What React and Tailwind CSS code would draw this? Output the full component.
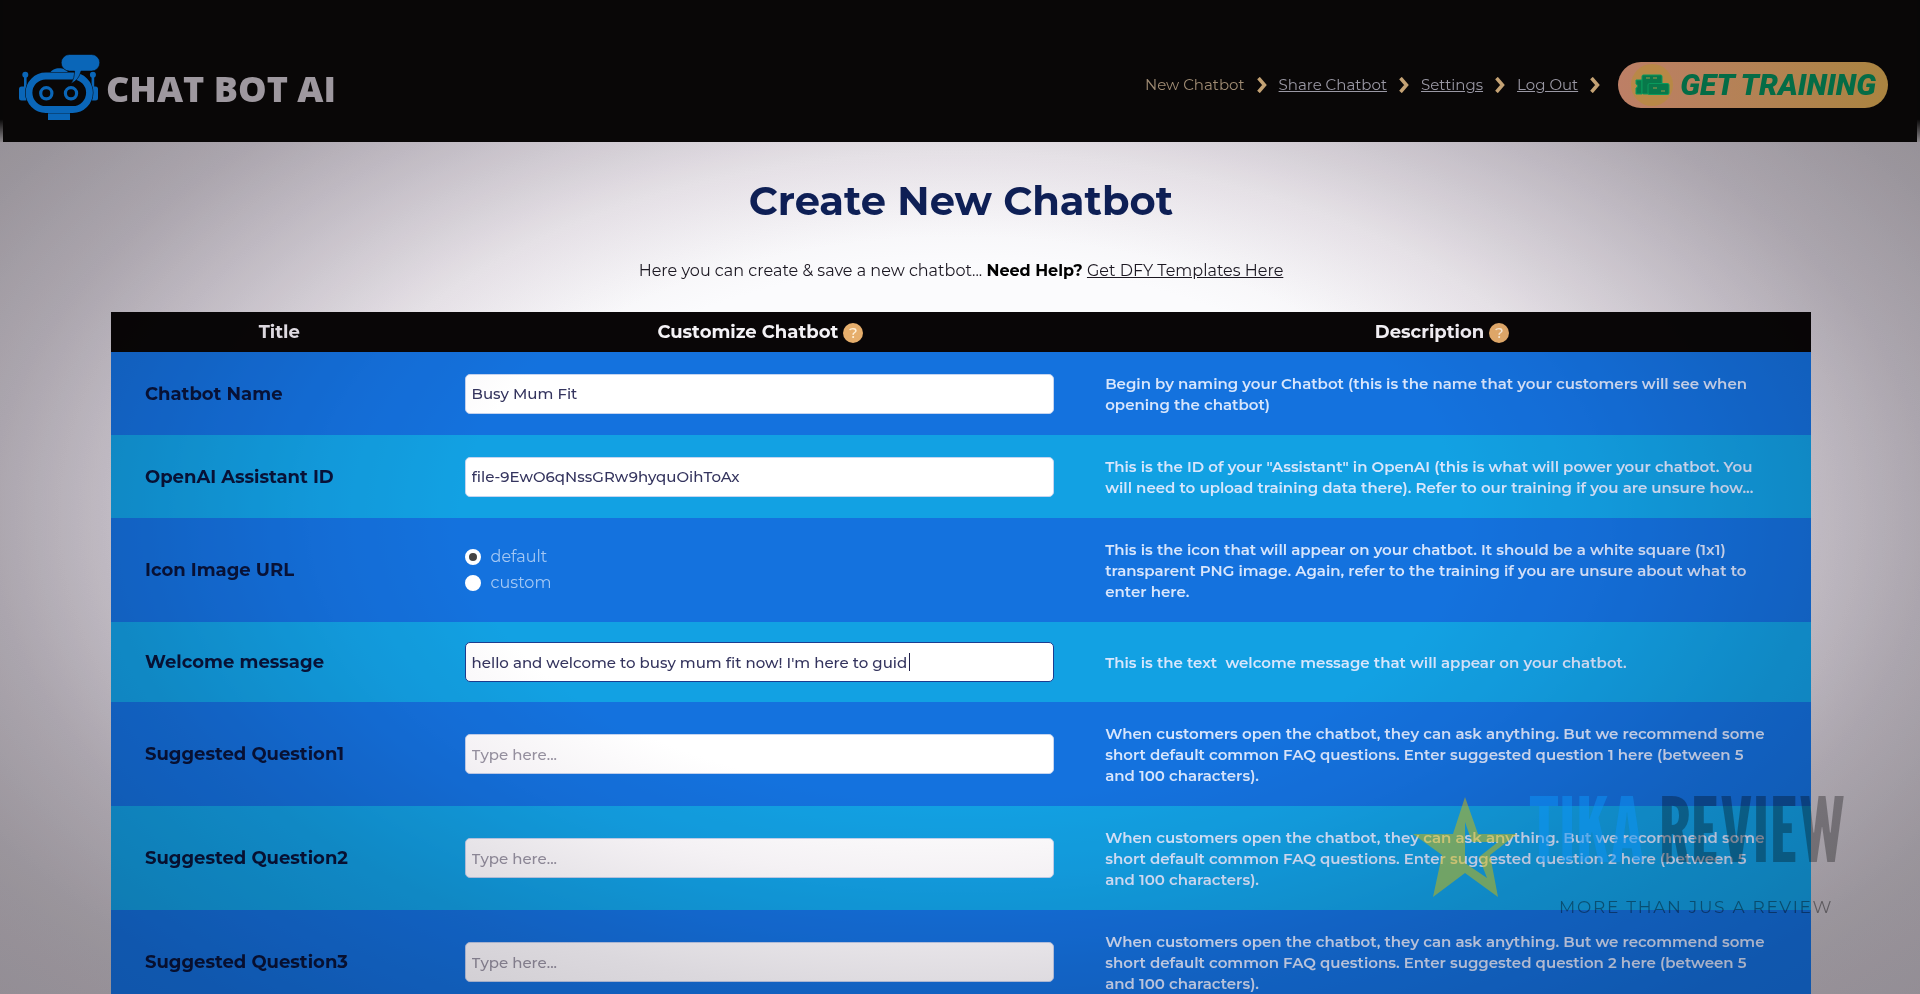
import { useState } from 'react';

const NAV = [
  { label: 'New Chatbot', active: true },
  { label: 'Share Chatbot' },
  { label: 'Settings' },
  { label: 'Log Out' },
];

const faq = (n) =>
  `When customers open the chatbot, they can ask anything. But we recommend some short default common FAQ questions. Enter suggested question ${n} here (between 5 and 100 characters).`;

const FIELDS = [
  {
    id: 'name', title: 'Chatbot Name', value: 'Busy Mum Fit', height: 'h-[83px]',
    desc: 'Begin by naming your Chatbot (this is the name that your customers will see when opening the chatbot)',
  },
  {
    id: 'assistant', title: 'OpenAI Assistant ID', value: 'file-9EwO6qNssGRw9hyquOihToAx', height: 'h-[83px]',
    desc: 'This is the ID of your "Assistant" in OpenAI (this is what will power your chatbot. You will need to upload training data there). Refer to our training if you are unsure how...',
  },
  {
    id: 'icon', title: 'Icon Image URL', type: 'radio', height: 'h-[104px]',
    desc: 'This is the icon that will appear on your chatbot. It should be a white square (1x1) transparent PNG image. Again, refer to the training if you are unsure about what to enter here.',
  },
  {
    id: 'welcome', title: 'Welcome message', value: "hello and welcome to busy mum fit now! I'm here to guid", focus: true, height: 'h-20',
    desc: 'This is the text  welcome message that will appear on your chatbot.',
  },
  { id: 'q1', title: 'Suggested Question1', height: 'h-[104px]', desc: faq(1) },
  { id: 'q2', title: 'Suggested Question2', height: 'h-[104px]', desc: faq(2) },
  { id: 'q3', title: 'Suggested Question3', height: 'h-[104px]', desc: faq(2) },
];

export default function App() {
  return (
    <div className="relative h-screen overflow-hidden bg-[radial-gradient(ellipse_1000px_560px_at_50%_52%,#fbfbfd_45%,#f0eef1_65%,#dedadf_86%,#d0ccd1_97%,#c5c1c5_116%,#c0bcc0_140%)] font-[Montserrat,Inter,sans-serif]">
      <Header />
      <main className="pt-9 pr-[109px] pl-[111px]">
        <h1 className="text-center text-[40px] leading-[46px] font-bold text-[#0e2057]">Create New Chatbot</h1>
        <p className="mt-[35px] text-center text-base leading-6 text-[#1c1822]">
          Here you can create &amp; save a new chatbot... <b className="text-black">Need Help?</b>{' '}
          <a href="#templates" className="underline">Get DFY Templates Here</a>
        </p>
        <FieldTable />
      </main>
      {/* Vignette */}
      <div className="pointer-events-none absolute inset-0 mix-blend-multiply bg-[radial-gradient(ellipse_1000px_560px_at_50%_52%,#ffffff_50%,#f4f1f4_65%,#dbd8dd_86%,#c6c3c8_112%,#bdbac0_140%)]" />
      <Watermark />
    </div>
  );
}

function Header() {
  return (
    <div className="relative z-10 bg-[linear-gradient(#080707_84%,#8c888c)] px-[3px]">
      <header className="flex h-[142px] items-center justify-between bg-[#090707] pt-7 pr-[29px] pl-4">
        <a href="#home" className="flex items-center gap-[5px] pt-1">
          <Robot />
          <span className="pt-1 font-['Open_Sans','Noto_Sans',sans-serif] text-4xl leading-10 font-extrabold text-[#9e989f]">CHAT BOT AI</span>
        </a>
        <nav className="flex items-center">
          {NAV.map(({ label, active }) => (
            <div key={label} className="flex items-center">
              <a href="#nav" className={`text-[15px] leading-6 ${active ? 'text-[#a08c74]' : 'text-[#9a98a4] underline'}`}>{label}</a>
              <svg viewBox="0 0 10 16" className="mx-3 h-4 w-[10px]" fill="none" stroke="#c4a274" strokeWidth="3.500">
                <path d="M1.500 1 7.500 8 1.500 15" />
              </svg>
            </div>
          ))}
          <button className="ml-1.5 flex h-[46px] items-center gap-1.5 rounded-full bg-linear-to-r from-[#bd7f66] to-[#aa8440] px-3">
            <Training />
            <span className="font-[Roboto,sans-serif] text-[30px] leading-9 font-black text-[#046c46] italic">GET TRAINING</span>
          </button>
        </nav>
      </header>
    </div>
  );
}

function FieldTable() {
  return (
    <table className="mt-[29px] w-full table-fixed text-left">
      <thead>
        <tr className="h-10 bg-[#090607] text-lg text-[#f4f2f6]">
          <th className="w-[19.8%] text-center font-bold">Title</th>
          <th className="w-[36.8%] text-center font-bold">Customize Chatbot <Help /></th>
          <th className="text-center font-bold">Description <Help /></th>
        </tr>
      </thead>
      <tbody>
        {FIELDS.map((field) => (
          <tr key={field.id} className={`odd:bg-[#1472de] even:bg-[#12a1e3] ${field.height}`}>
            <th className="pl-[34px] text-lg font-bold text-[#08133a]">
              <label htmlFor={field.id}>{field.title}</label>
            </th>
            <td className="pr-[19px] pl-[17px]">
              {field.type === 'radio' ? <IconChoice id={field.id} /> : <TextField field={field} />}
            </td>
            <td className="pr-9 pl-8 text-[15px] leading-[21px] font-semibold whitespace-pre-wrap text-[#d8e6fc]">{field.desc}</td>
          </tr>
        ))}
      </tbody>
    </table>
  );
}

function TextField({ field }) {
  const [value, setValue] = useState(field.value || '');
  return (
    <div className="relative">
      <input
        id={field.id}
        value={value}
        onChange={(e) => setValue(e.target.value)}
        placeholder="Type here..."
        className={`block h-10 w-full rounded-[5px] border bg-white px-[6px] text-[15px] font-medium text-[#34345e] outline-none placeholder:text-[#9a96a4] ${field.focus ? 'border-[#1c3c90]' : 'border-[#c4d4f0]'}`}
      />
      {field.focus && <span className="absolute top-[11px] left-[444px] h-[18px] w-px bg-[#20204a]" />}
    </div>
  );
}

function IconChoice({ id }) {
  const [choice, setChoice] = useState('default');
  return (
    <div>
      {['default', 'custom'].map((option, i) => (
        <label key={option} className="flex h-[26px] items-center gap-[10px] text-base text-[#a4c8f4]">
          <input
            id={i === 0 ? id : undefined}
            type="radio"
            name="icon"
            checked={choice === option}
            onChange={() => setChoice(option)}
            className="size-4 appearance-none rounded-full border-4 border-white bg-white checked:bg-[#444]"
          />
          {option}
        </label>
      ))}
    </div>
  );
}

function Help() {
  return (
    <span className="inline-flex size-5 items-center justify-center rounded-full bg-[#e6ae6c] text-[15px] leading-5 font-medium text-[#fff0d8]">?</span>
  );
}

function Robot() {
  return (
    <svg viewBox="0 0 82 66" className="h-[66px] w-[82px]" fill="#0a66b8">
      <path d="M5 21h2.600v13H5zM72.600 21h2.600v13h-2.600z" />
      <circle cx="6.300" cy="20.700" r="3" />
      <circle cx="73.900" cy="20.700" r="3" />
      <path d="M31 19c2.500-6.500 16-6.500 18.500 0z" />
      <rect x="0" y="32.500" width="9" height="14" rx="2.500" />
      <rect x="71" y="32.500" width="8" height="14" rx="2.500" />
      <rect x="10" y="22" width="60.500" height="33.500" rx="16.750" fill="none" stroke="#090707" strokeWidth="7.800" />
      <rect x="10" y="22" width="60.500" height="33.500" rx="16.750" fill="none" stroke="#0a66b8" strokeWidth="6.800" />
      <path d="M29 59.300h22V66H29z" />
      <g fill="none" stroke="#0a66b8" strokeWidth="3.200">
        <circle cx="27.300" cy="39.300" r="5.600" />
        <circle cx="52" cy="39.300" r="5.600" />
      </g>
      <path
        d="M50.500.500h22a8.300 8.300 0 0 1 0 16.600H62c-1.500 5.500-4.500 10-10 12.600 2.600-4 3.600-8.500 3.600-12.600h-5.100a8.300 8.300 0 0 1 0-16.600z"
        stroke="#090707"
        strokeWidth="0.600"
      />
    </svg>
  );
}

function Training() {
  return (
    <svg viewBox="0 0 44 44" className="size-11">
      <circle cx="22" cy="22" r="21" fill="#b88c3c" opacity="0.7" />
      <g fill="#08784a" stroke="#0a9a5c" strokeWidth="1">
        <path d="M12 17H6v4c2 0 2 4 0 4v6h6z" />
        <rect x="12" y="12" width="20" height="19" rx="1.500" />
        <rect x="18" y="20.500" width="21" height="11" rx="1.500" />
      </g>
      <path d="M16 15h4M23 15h4M23 25h4M31 28h4" stroke="#a4964a" strokeWidth="1" />
    </svg>
  );
}

function Watermark() {
  return (
    <div className="pointer-events-none absolute right-[75px] bottom-[75px] flex items-start gap-3">
      <svg viewBox="0 0 104 100" className="mt-0.5 h-[100px] w-[104px]" fill="#d2ba04" fillRule="evenodd" opacity="0.500">
        <path d="M52 0 65 37h39L77 58l8 42-33-24-32 24 9-42L0 37h40zM52 25v41l22 15-8-21 19-15H59z" />
      </svg>
      <div className="flex flex-col items-end">
        <div className="font-['League_Gothic','Antonio','Fjalla_One','Bebas_Neue',sans-serif] text-[90px] leading-[68px]">
          <span className="text-[#0c94f8]/50">TIKA</span> <span className="text-black/30">REVIEW</span>
        </div>
        <div className="mt-8 pr-3 text-[17px] leading-6 tracking-widest text-black/40">MORE THAN JUS A REVIEW</div>
      </div>
    </div>
  );
}
